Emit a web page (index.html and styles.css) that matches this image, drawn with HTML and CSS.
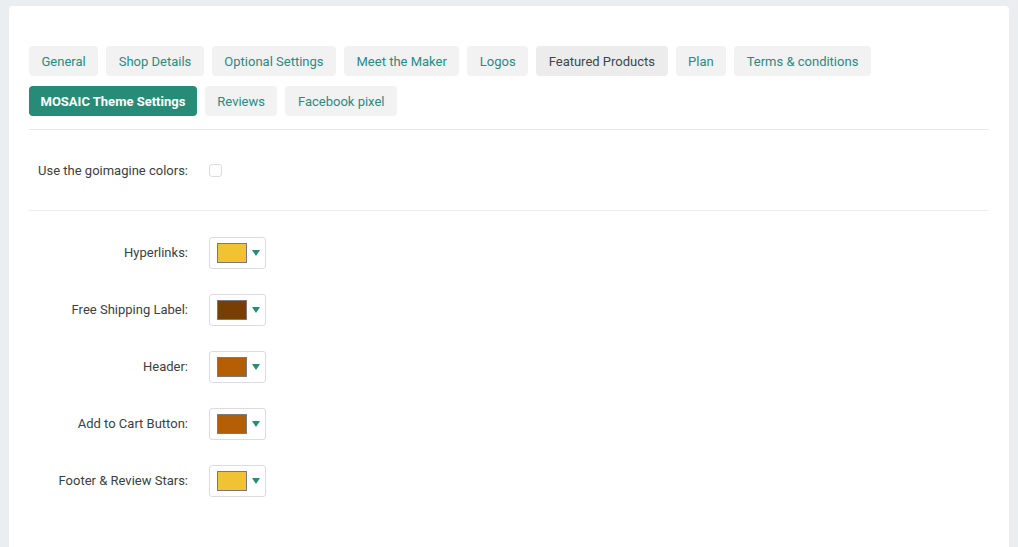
FILE: index.html
```html
<!DOCTYPE html>
<html>
<head>
<meta charset="utf-8">
<link rel="stylesheet" href="styles.css">
</head>
<body>
<div class="card">
  <nav class="tabs">
    <a class="tab">General</a>
    <a class="tab">Shop Details</a>
    <a class="tab">Optional Settings</a>
    <a class="tab">Meet the Maker</a>
    <a class="tab">Logos</a>
    <a class="tab tab-hover">Featured Products</a>
    <a class="tab">Plan</a>
    <a class="tab">Terms &amp; conditions</a>
    <a class="tab tab-active">MOSAIC Theme Settings</a>
    <a class="tab">Reviews</a>
    <a class="tab">Facebook pixel</a>
  </nav>
  <div class="section section-check">
    <div class="row">
      <label class="label">Use the goimagine colors:</label>
      <span class="checkbox"></span>
    </div>
  </div>
  <div class="section section-colors">
    <div class="row">
      <label class="label">Hyperlinks:</label>
      <div class="picker"><span class="swatch swatch-yellow"></span><span class="arrow"></span></div>
    </div>
    <div class="row">
      <label class="label">Free Shipping Label:</label>
      <div class="picker"><span class="swatch swatch-brown"></span><span class="arrow"></span></div>
    </div>
    <div class="row">
      <label class="label">Header:</label>
      <div class="picker"><span class="swatch swatch-orange"></span><span class="arrow"></span></div>
    </div>
    <div class="row">
      <label class="label">Add to Cart Button:</label>
      <div class="picker"><span class="swatch swatch-orange"></span><span class="arrow"></span></div>
    </div>
    <div class="row">
      <label class="label">Footer &amp; Review Stars:</label>
      <div class="picker"><span class="swatch swatch-yellow"></span><span class="arrow"></span></div>
    </div>
  </div>
</div>
</body>
</html>
```

FILE: styles.css
```css
* { box-sizing: border-box; }
html, body { height: 100%; }
body {
  margin: 0;
  padding: 6px 9px 0 9px;
  background: #ebeef1;
  font-family: Roboto, "Liberation Sans", Arial, sans-serif;
  font-size: 13px;
  color: #3a3f44;
  overflow: hidden;
}
.card {
  width: 1000px;
  min-height: 560px;
  background: #fff;
  border-radius: 4px 4px 0 0;
  padding: 40px 20px 0 20px;
}
.tabs {
  display: flex;
  flex-wrap: wrap;
  gap: 10px 8px;
  padding-bottom: 13px;
  border-bottom: 1px solid #e6e8ea;
}
.tab {
  display: inline-flex;
  align-items: center;
  height: 30px;
  padding: 0 12.5px;
  background: #f2f2f2;
  border-radius: 4px;
  color: #2a8a82;
  line-height: 1;
  cursor: pointer;
}
.tab-hover {
  background: #ececec;
  color: #3a4750;
}
.tab-active {
  padding: 0 11.5px;
  background: #268c77;
  color: #fff;
  font-weight: 700;
}
.section-check {
  padding: 28px 0;
  border-bottom: 1px solid #eceeef;
}
.section-check .row { height: 24px; }
.section-check .label { padding-bottom: 0; padding-top: 1px; }
.section-colors {
  padding-top: 26px;
  display: flex;
  flex-direction: column;
  gap: 25px;
}
.row {
  display: flex;
  align-items: center;
}
.label {
  width: 159px;
  margin-right: 21px;
  text-align: right;
  color: #3a3f44;
  line-height: 1;
  padding-bottom: 1px;
}
.checkbox {
  width: 13px;
  height: 13px;
  border: 1px solid #dcdcdc;
  border-radius: 3px;
  background: #fff;
}
.picker {
  width: 57px;
  height: 32px;
  border: 1px solid #d9dde1;
  border-radius: 3px;
  display: flex;
  align-items: center;
  padding-left: 7px;
  background: #fff;
}
.swatch {
  width: 30px;
  height: 20px;
  border: 1px solid #7a7a7a;
}
.swatch-yellow { background: #f1c232; }
.swatch-brown { background: #783f04; }
.swatch-orange { background: #b45f06; }
.arrow {
  margin-left: 5px;
  width: 0;
  height: 0;
  border-left: 4px solid transparent;
  border-right: 4px solid transparent;
  border-top: 6px solid #268c77;
}
```
